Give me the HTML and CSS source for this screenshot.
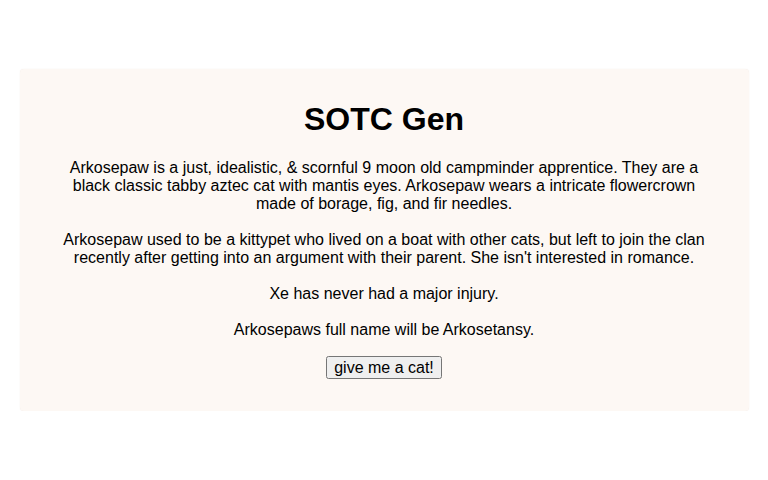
FILE: index.html
```html
<!DOCTYPE html>
<html>
<head>
<meta charset="utf-8">
<link rel="stylesheet" href="styles.css">
</head>
<body>
<div class="card">
  <h1 class="title">SOTC Gen</h1>
  <p class="text">Arkosepaw is a just, idealistic, &amp; scornful 9 moon old campminder apprentice. They are a black classic tabby aztec cat with mantis eyes. Arkosepaw wears a intricate flowercrown made of borage, fig, and fir needles.</p>
  <p class="text">Arkosepaw used to be a kittypet who lived on a boat with other cats, but left to join the clan recently after getting into an argument with their parent. She isn't interested in romance.</p>
  <p class="text">Xe has never had a major injury.</p>
  <p class="text">Arkosepaws full name will be Arkosetansy.</p>
  <button class="btn">give me a cat!</button>
</div>
</body>
</html>
```
FILE: styles.css
```css
html, body {
  margin: 0;
  padding: 0;
  background: #ffffff;
}
body {
  font-family: "Liberation Sans", Arial, sans-serif;
  color: #000;
  padding-top: 69px;
}
.card {
  width: 729px;
  box-sizing: border-box;
  margin: 0 auto;
  background: #fdf8f4;
  border-radius: 4px;
  box-shadow: 0 0 1px rgba(200, 180, 160, 0.35);
  padding: 31px 40px 32px;
  text-align: center;
}
.title {
  font-size: 32px;
  line-height: 38px;
  font-weight: bold;
  margin: 0 0 21px;
}
.text {
  font-size: 16px;
  line-height: 18px;
  margin: 0 0 18px;
}
.text:last-of-type {
  margin-bottom: 17px;
}
.btn {
  font-family: "Liberation Sans", Arial, sans-serif;
  font-size: 16px;
  line-height: 18px;
  padding: 1px 6px;
  height: 23px;
}
```
